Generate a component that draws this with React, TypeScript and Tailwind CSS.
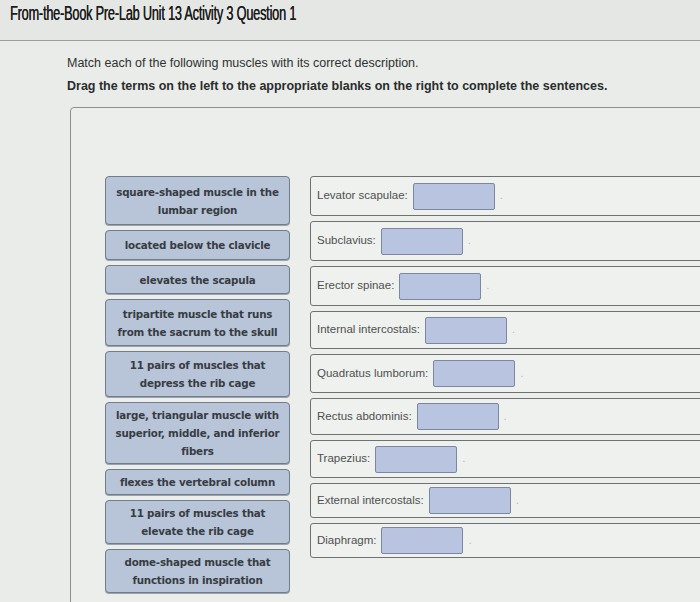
const terms = [
  { text: "square-shaped muscle in the lumbar region", h: "h-[49px]" },
  { text: "located below the clavicle", h: "h-[30px]" },
  { text: "elevates the scapula", h: "h-[29px]" },
  { text: "tripartite muscle that runs from the sacrum to the skull", h: "h-[47px]" },
  { text: "11 pairs of muscles that depress the rib cage", h: "h-[46px]" },
  { text: "large, triangular muscle with superior, middle, and inferior fibers", h: "h-[62px]" },
  { text: "flexes the vertebral column", h: "h-[26px]" },
  { text: "11 pairs of muscles that elevate the rib cage", h: "h-[44px]" },
  { text: "dome-shaped muscle that functions in inspiration", h: "h-[44px]" },
]

const blanks = [
  { label: "Levator scapulae:", h: "h-[40px]" },
  { label: "Subclavius:", h: "h-[40px]" },
  { label: "Erector spinae:", h: "h-[40px]" },
  { label: "Internal intercostals:", h: "h-[38px]" },
  { label: "Quadratus lumborum:", h: "h-[39px]" },
  { label: "Rectus abdominis:", h: "h-[37px]" },
  { label: "Trapezius:", h: "h-[38px]" },
  { label: "External intercostals:", h: "h-[35px]" },
  { label: "Diaphragm:", h: "h-[35px]" },
]

export default function App() {
  return (
    <div className="w-[700px] h-[602px] overflow-hidden bg-[#eaece9] font-['Liberation_Sans',Arial,sans-serif]">
      {/* page header */}
      <div className="h-[41px] bg-[#e5e7e4] border-b border-[#9c9e9b] pl-[10px] pt-[1px]">
        <h1 className="inline-block origin-left scale-x-[0.635] whitespace-nowrap text-[20px] leading-[24px] text-[#1b1c1c] tracking-[-0.3px] [text-shadow:0.4px_0_0_#1b1c1c]">
          From-the-Book Pre-Lab Unit 13 Activity 3 Question 1
        </h1>
      </div>

      <div className="pl-[67px] pt-[14px] text-[12.5px] leading-[16px] text-[#2f3132]">
        <p>Match each of the following muscles with its correct description.</p>
        <p className="mt-[7px] font-bold text-[#2a2c2d]">
          Drag the terms on the left to the appropriate blanks on the right to complete the sentences.
        </p>
      </div>

      {/* drag-and-drop area */}
      <div className="ml-[70px] mt-[13px] w-[700px] h-[520px] border border-[#8d908d] rounded-[4px] bg-[#eceeeb] flex gap-[20px] pl-[34px] pt-[68px]">
        <div className="w-[185px] flex flex-col gap-[5px]">
          {terms.map((t) => (
            <div
              key={t.text}
              className={`${t.h} flex items-center justify-center px-[5px] text-center rounded-[4px] border border-[#727d8b] bg-[#b8c4d7] text-[10.3px] leading-[18px] font-bold text-[#373c43] font-['DejaVu_Sans',Verdana,sans-serif] tracking-[-0.2px] shadow-[0_1px_0_#9aa3ad]`}
            >
              {t.text}
            </div>
          ))}
        </div>

        <div className="flex-1 flex flex-col gap-[5px]">
          {blanks.map((b) => (
            <div
              key={b.label}
              className={`${b.h} flex items-center pl-[6px] rounded-[3px] border border-[#6f7270] bg-[#eff1ee] text-[11.5px] text-[#4d5050]`}
            >
              <span>{b.label}</span>
              <span className="ml-[5px] w-[82px] h-[27px] rounded-[2px] border border-[#7c88a0] bg-[#b9c5e0]" />
              <span className="ml-[5px] text-[#b5b7b5]">.</span>
            </div>
          ))}
        </div>
      </div>
    </div>
  )
}
